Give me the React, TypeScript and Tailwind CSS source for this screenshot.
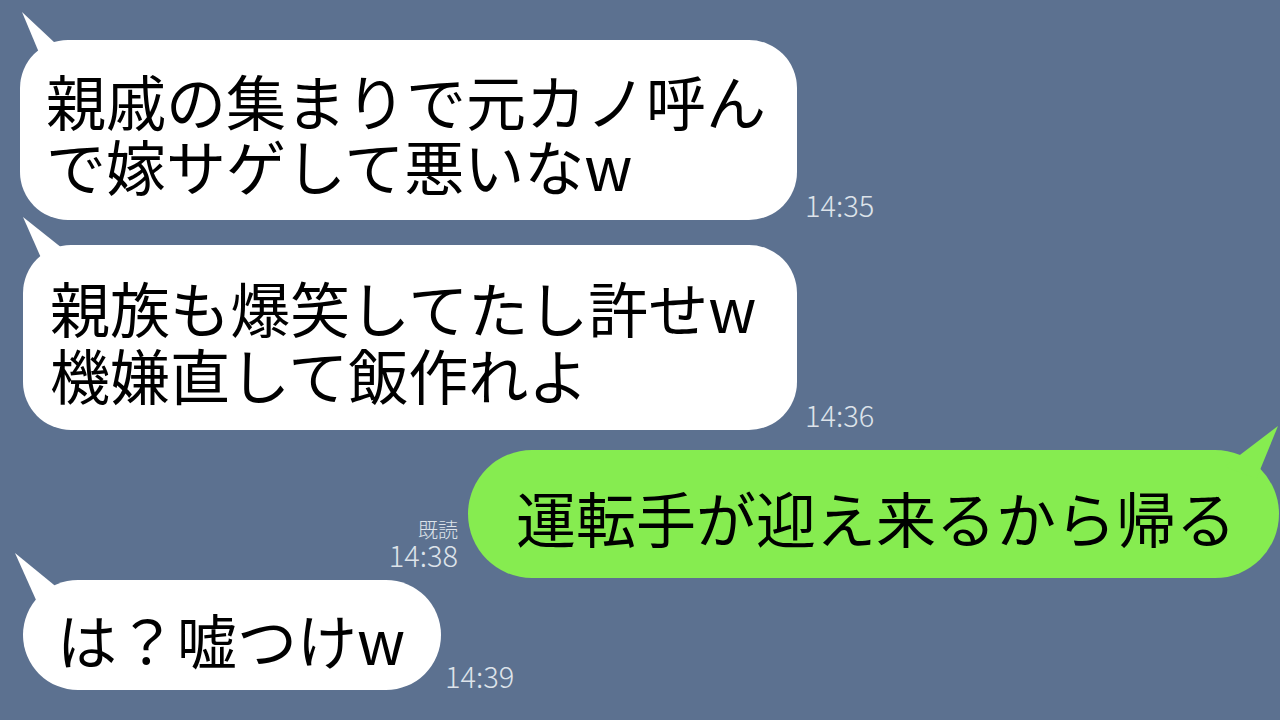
import React from "react";

const jp = { fontFamily: '"Noto Sans CJK JP", "Noto Sans", sans-serif' };

function Stamp({ children }: { children: React.ReactNode }) {
  return (
    <div className="text-[29px] leading-none font-light text-[#dde3ea] mb-[1px] ml-[8px]" style={jp}>
      {children}
    </div>
  );
}

export default function App() {
  return (
    <div className="w-[1280px] h-[720px] overflow-hidden bg-[#5c7190] flex flex-col pt-[40px]" style={jp}>
      {/* Message 1 */}
      <div className="flex items-end pl-[20px]">
        <div className="relative w-[777px] h-[180px] bg-white rounded-[48px] pl-[26px] flex items-center">
          <svg className="absolute left-0 top-[-30px] overflow-visible" width="60" height="60">
            <polygon points="2,2 24.5,55.75 51.5,48.5" fill="#ffffff" />
          </svg>
          <div className="relative text-[60px] leading-[65px] text-black mt-[4px]">
            親戚の集まりで元カノ呼ん
            <br />
            で嫁サゲして悪いなw
          </div>
        </div>
        <Stamp>14:35</Stamp>
      </div>

      {/* Message 2 */}
      <div className="flex items-end pl-[23px] mt-[25px]">
        <div className="relative w-[774px] h-[185px] bg-white rounded-[48px] pl-[27px] flex items-center">
          <svg className="absolute left-0 top-[-30px] overflow-visible" width="60" height="60">
            <polygon points="0,2 23.75,55.75 58.5,48.5" fill="#ffffff" />
          </svg>
          <div className="relative text-[60px] leading-[67px] text-black mt-[5px]">
            親族も爆笑してたし許せw
            <br />
            機嫌直して飯作れよ
          </div>
        </div>
        <Stamp>14:36</Stamp>
      </div>

      {/* Message 3 (mine) */}
      <div className="flex items-end justify-end mt-[20px] pr-[1px]">
        <div
          className="flex flex-col items-end mr-[10px] mb-[9px] font-light text-[#dde3ea] leading-none"
          style={jp}
        >
          <div className="text-[20px] leading-none">既読</div>
          <div className="text-[29px] leading-none">14:38</div>
        </div>
        <div className="relative w-[811px] h-[128px] bg-[#86ec50] rounded-full pl-[48px] flex items-center">
          <svg className="absolute left-[740px] top-[-30px] overflow-visible" width="80" height="70">
            <polygon points="70,6 48.4,58.8 16.8,46.6" fill="#86ec50" />
          </svg>
          <div className="relative text-[60px] leading-[65px] text-black mt-[4px]">
            運転手が迎え来るから帰る
          </div>
        </div>
      </div>

      {/* Message 4 */}
      <div className="flex items-end pl-[23px] mt-[2px]">
        <div className="relative w-[418px] h-[110px] bg-white rounded-full pl-[34px] flex items-center">
          <svg className="absolute left-[-10px] top-[-30px] overflow-visible" width="60" height="60">
            <polygon points="2,3 26.2,56.9 55.2,46.4" fill="#ffffff" />
          </svg>
          <div className="relative text-[60px] leading-[65px] text-black mt-[6px]">
            は？嘘つけw
          </div>
        </div>
        <div className="mb-[-1px] ml-[-4px]">
          <Stamp>14:39</Stamp>
        </div>
      </div>
    </div>
  );
}
